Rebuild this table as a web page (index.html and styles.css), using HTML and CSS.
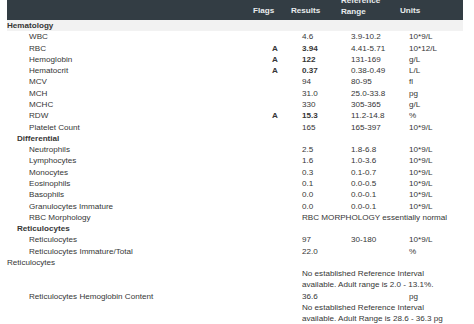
FILE: index.html
```html
<!DOCTYPE html>
<html>
<head>
<meta charset="utf-8">
<link rel="stylesheet" href="styles.css">
</head>
<body>
<div class="table">
  <div class="row head">
    <div></div>
    <div class="h">Flags</div>
    <div class="h">Results</div>
    <div class="h two">Reference<br>Range</div>
    <div class="h">Units</div>
  </div>
  <div class="row group"><div class="lbl l0 b">Hematology</div></div>
  <div class="row"><div class="lbl l2">WBC</div><div class="flag"></div><div class="res">4.6</div><div class="ref">3.9-10.2</div><div class="unit">10*9/L</div></div>
  <div class="row"><div class="lbl l2">RBC</div><div class="flag">A</div><div class="res b">3.94</div><div class="ref">4.41-5.71</div><div class="unit">10*12/L</div></div>
  <div class="row"><div class="lbl l2">Hemoglobin</div><div class="flag">A</div><div class="res b">122</div><div class="ref">131-169</div><div class="unit">g/L</div></div>
  <div class="row"><div class="lbl l2">Hematocrit</div><div class="flag">A</div><div class="res b">0.37</div><div class="ref">0.38-0.49</div><div class="unit">L/L</div></div>
  <div class="row"><div class="lbl l2">MCV</div><div class="flag"></div><div class="res">94</div><div class="ref">80-95</div><div class="unit">fl</div></div>
  <div class="row"><div class="lbl l2">MCH</div><div class="flag"></div><div class="res">31.0</div><div class="ref">25.0-33.8</div><div class="unit">pg</div></div>
  <div class="row"><div class="lbl l2">MCHC</div><div class="flag"></div><div class="res">330</div><div class="ref">305-365</div><div class="unit">g/L</div></div>
  <div class="row"><div class="lbl l2">RDW</div><div class="flag">A</div><div class="res b">15.3</div><div class="ref">11.2-14.8</div><div class="unit">%</div></div>
  <div class="row"><div class="lbl l2">Platelet Count</div><div class="flag"></div><div class="res">165</div><div class="ref">165-397</div><div class="unit">10*9/L</div></div>
  <div class="row"><div class="lbl l1 b">Differential</div></div>
  <div class="row"><div class="lbl l2">Neutrophils</div><div class="flag"></div><div class="res">2.5</div><div class="ref">1.8-6.8</div><div class="unit">10*9/L</div></div>
  <div class="row"><div class="lbl l2">Lymphocytes</div><div class="flag"></div><div class="res">1.6</div><div class="ref">1.0-3.6</div><div class="unit">10*9/L</div></div>
  <div class="row"><div class="lbl l2">Monocytes</div><div class="flag"></div><div class="res">0.3</div><div class="ref">0.1-0.7</div><div class="unit">10*9/L</div></div>
  <div class="row"><div class="lbl l2">Eosinophils</div><div class="flag"></div><div class="res">0.1</div><div class="ref">0.0-0.5</div><div class="unit">10*9/L</div></div>
  <div class="row"><div class="lbl l2">Basophils</div><div class="flag"></div><div class="res">0.0</div><div class="ref">0.0-0.1</div><div class="unit">10*9/L</div></div>
  <div class="row"><div class="lbl l2">Granulocytes Immature</div><div class="flag"></div><div class="res">0.0</div><div class="ref">0.0-0.1</div><div class="unit">10*9/L</div></div>
  <div class="row"><div class="lbl l2">RBC Morphology</div><div class="flag"></div><div class="res span">RBC MORPHOLOGY essentially normal</div></div>
  <div class="row"><div class="lbl l1 b">Reticulocytes</div></div>
  <div class="row"><div class="lbl l2">Reticulocytes</div><div class="flag"></div><div class="res">97</div><div class="ref">30-180</div><div class="unit">10*9/L</div></div>
  <div class="row"><div class="lbl l2">Reticulocytes Immature/Total</div><div class="flag"></div><div class="res">22.0</div><div class="ref"></div><div class="unit">%</div></div>
  <div class="row"><div class="lbl l0">Reticulocytes</div></div>
  <div class="row multi"><div class="lbl"></div><div class="flag"></div><div class="res span">No established Reference Interval<br>available. Adult range is 2.0 - 13.1%.</div></div>
  <div class="row"><div class="lbl l2">Reticulocytes Hemoglobin Content</div><div class="flag"></div><div class="res">36.6</div><div class="ref"></div><div class="unit">pg</div></div>
  <div class="row multi"><div class="lbl"></div><div class="flag"></div><div class="res span">No established Reference Interval<br>available. Adult Range is 28.6 - 36.3 pg</div></div>
</div>
</body>
</html>
```
FILE: styles.css
```css
html, body {
  margin: 0;
  padding: 0;
  background: #ffffff;
}
body {
  font-family: "Liberation Sans", Arial, sans-serif;
  font-size: 8.1px;
  color: #363636;
}
.table {
  margin-left: 7px;
  width: 456px;
}
.row {
  display: grid;
  grid-template-columns: 246px 38px 50px 59px 63px;
  line-height: 11.28px;
  min-height: 11.28px;
  white-space: nowrap;
}
.head {
  height: 20px;
  background: #333d44;
  align-items: center;
  color: #e9ecee;
  font-weight: bold;
  line-height: 11px;
}
.head .two {
  margin-top: -8px;
}
.group {
  background: #f2f2f2;
}
.b { font-weight: bold; }
.l0 { padding-left: 0; }
.l1 { padding-left: 10px; }
.l2 { padding-left: 22px; }
.flag { padding-left: 19px; font-weight: bold; }
.res { padding-left: 11px; }
.ref { padding-left: 10px; }
.unit { padding-left: 9px; }
.span { grid-column: 3 / span 3; }
```
